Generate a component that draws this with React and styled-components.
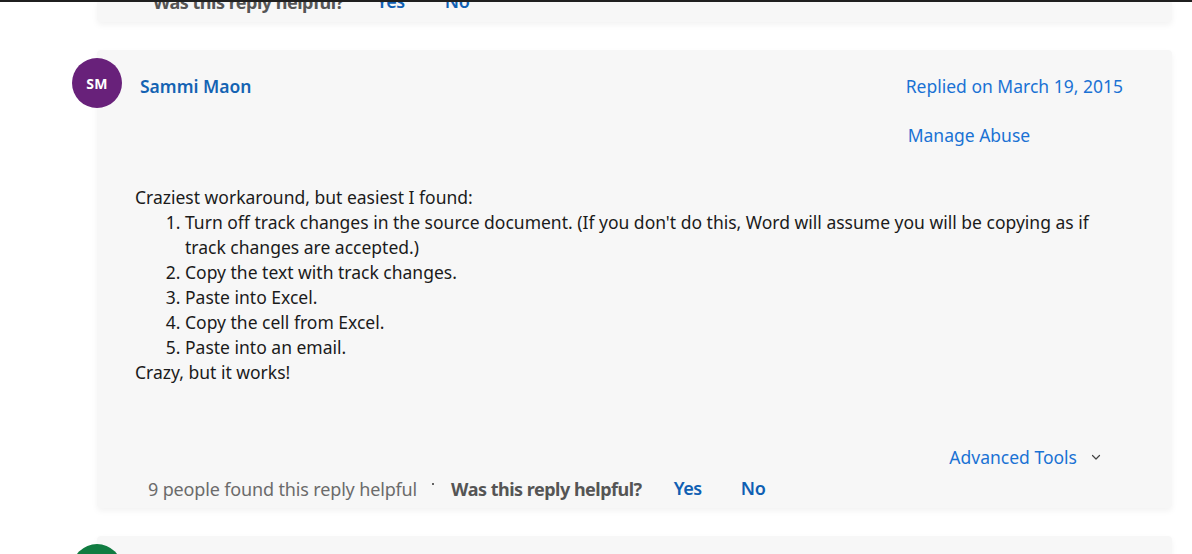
import React from "react";
import styled, { createGlobalStyle } from "styled-components";

const GlobalStyle = createGlobalStyle`
  html, body { margin: 0; padding: 0; background: #ffffff; }
  body { font-family: "Noto Sans", "Open Sans", sans-serif; }
  * { box-sizing: border-box; }
`;

const Page = styled.div`
  border-top: 2px solid #1f1f1f;
  height: 554px;
  overflow: hidden;
  padding-left: 97px;
  padding-right: 20px;
`;

const Thread = styled.div`
  display: flex;
  flex-direction: column;
  gap: 28px;
  width: 1075px;
`;

const Post = styled.div`
  position: relative;
`;

const Card = styled.div`
  background: #f7f7f7;
  border-radius: 4px;
  box-shadow: 0 3px 6px rgba(0, 0, 0, 0.05);
  height: ${(p) => p.$height}px;
  margin-top: ${(p) => p.$offset || 0}px;
  display: flex;
  flex-direction: column;
  justify-content: ${(p) => (p.$bottom ? "flex-end" : "flex-start")};
`;

const Avatar = styled.div`
  position: absolute;
  left: -25px;
  top: ${(p) => p.$top}px;
  width: 50px;
  height: 50px;
  border-radius: 50%;
  background: ${(p) => p.$color};
  color: #fff;
  display: flex;
  align-items: center;
  justify-content: center;
  font-size: 14px;
  font-weight: 700;
  letter-spacing: 0.3px;
`;

const Header = styled.div`
  display: flex;
  justify-content: space-between;
  padding: 23px 49px 0 43px;
`;

const Name = styled.a`
  color: #1463b3;
  font-size: 17.5px;
  font-weight: 600;
  line-height: 26px;
  text-decoration: none;
`;

const Meta = styled.div`
  display: flex;
  flex-direction: column;
  align-items: flex-start;
  gap: 23px;
`;

const MetaLink = styled.a`
  color: #1a72d4;
  font-size: 17.5px;
  line-height: 26px;
  padding-left: ${(p) => p.$indent || 0}px;
  text-decoration: none;
`;

const Body = styled.div`
  padding: 37px 50px 0 38px;
  color: #1b1b1b;
  font-size: 17.5px;
  line-height: 25px;
  flex: 1;
`;

const Para = styled.p`
  margin: 0;
`;

const Steps = styled.ol`
  margin: 0;
  padding-left: 50px;
`;

const Step = styled.li`
  padding-left: 0;
`;

const Tools = styled.div`
  display: flex;
  justify-content: flex-end;
  align-items: center;
  gap: 13px;
  padding-right: 70px;
  margin-bottom: 3px;
`;

const ToolsLink = styled.a`
  color: #1a72d4;
  font-size: 17.5px;
  line-height: 26px;
`;

const Footer = styled.div`
  display: flex;
  align-items: center;
  padding: 0 0 0 51px;
  height: ${(p) => p.$height}px;
  margin-bottom: ${(p) => p.$bottom || 0}px;
`;

const FoundText = styled.span`
  color: #6b6b6b;
  font-size: 18px;
  letter-spacing: -0.15px;
`;

const Dot = styled.span`
  width: 2px;
  height: 2px;
  border-radius: 1px;
  background: #333;
  margin: 0 17px 10px 15px;
`;

const Question = styled.span`
  color: #555;
  font-size: 18px;
  font-weight: 700;
  letter-spacing: -0.5px;
  margin-left: ${(p) => p.$indent || 0}px;
`;

const Vote = styled.a`
  color: #0f5fb3;
  font-size: 18px;
  font-weight: 600;
  letter-spacing: -0.4px;
  margin-left: ${(p) => p.$gap}px;
  margin-bottom: 3px;
`;

const Chevron = () => (
  <svg width="12" height="12" viewBox="0 0 12 12" fill="none">
    <path d="M2.5 4.5 6 8l3.5-3.5" stroke="#444" strokeWidth="1.2" strokeLinecap="round" strokeLinejoin="round" />
  </svg>
);

export default function App() {
  return (
    <>
      <GlobalStyle />
      <Page>
        <Thread>
          <Post>
            <Card $height={22} $offset={-2} $bottom>
              <Footer $height={26} $bottom={7}>
                <Question $indent={5}>Was this reply helpful?</Question>
                <Vote $gap={33}>Yes</Vote>
                <Vote $gap={40}>No</Vote>
              </Footer>
            </Card>
          </Post>
          <Post>
            <Avatar $color="#68217a" $top={8}>SM</Avatar>
            <Card $height={458}>
              <Header>
                <Name>Sammi Maon</Name>
                <Meta>
                  <MetaLink>Replied on March 19, 2015</MetaLink>
                  <MetaLink $indent={2}>Manage Abuse</MetaLink>
                </Meta>
              </Header>
              <Body>
                <Para>Craziest workaround, but easiest I found:</Para>
                <Steps>
                  <Step>Turn off track changes in the source document. (If you don't do this, Word will assume you will be copying as if track changes are accepted.)</Step>
                  <Step>Copy the text with track changes.</Step>
                  <Step>Paste into Excel.</Step>
                  <Step>Copy the cell from Excel.</Step>
                  <Step>Paste into an email.</Step>
                </Steps>
                <Para>Crazy, but it works!</Para>
              </Body>
              <Tools>
                <ToolsLink>Advanced Tools</ToolsLink>
                <Chevron />
              </Tools>
              <Footer $height={32} $bottom={3}>
                <FoundText>9 people found this reply helpful</FoundText>
                <Dot />
                <Question>Was this reply helpful?</Question>
                <Vote $gap={32}>Yes</Vote>
                <Vote $gap={39}>No</Vote>
              </Footer>
            </Card>
          </Post>
          <Post>
            <Avatar $color="#107c41" $top={8}>JD</Avatar>
            <Card $height={60} />
          </Post>
        </Thread>
      </Page>
    </>
  );
}
